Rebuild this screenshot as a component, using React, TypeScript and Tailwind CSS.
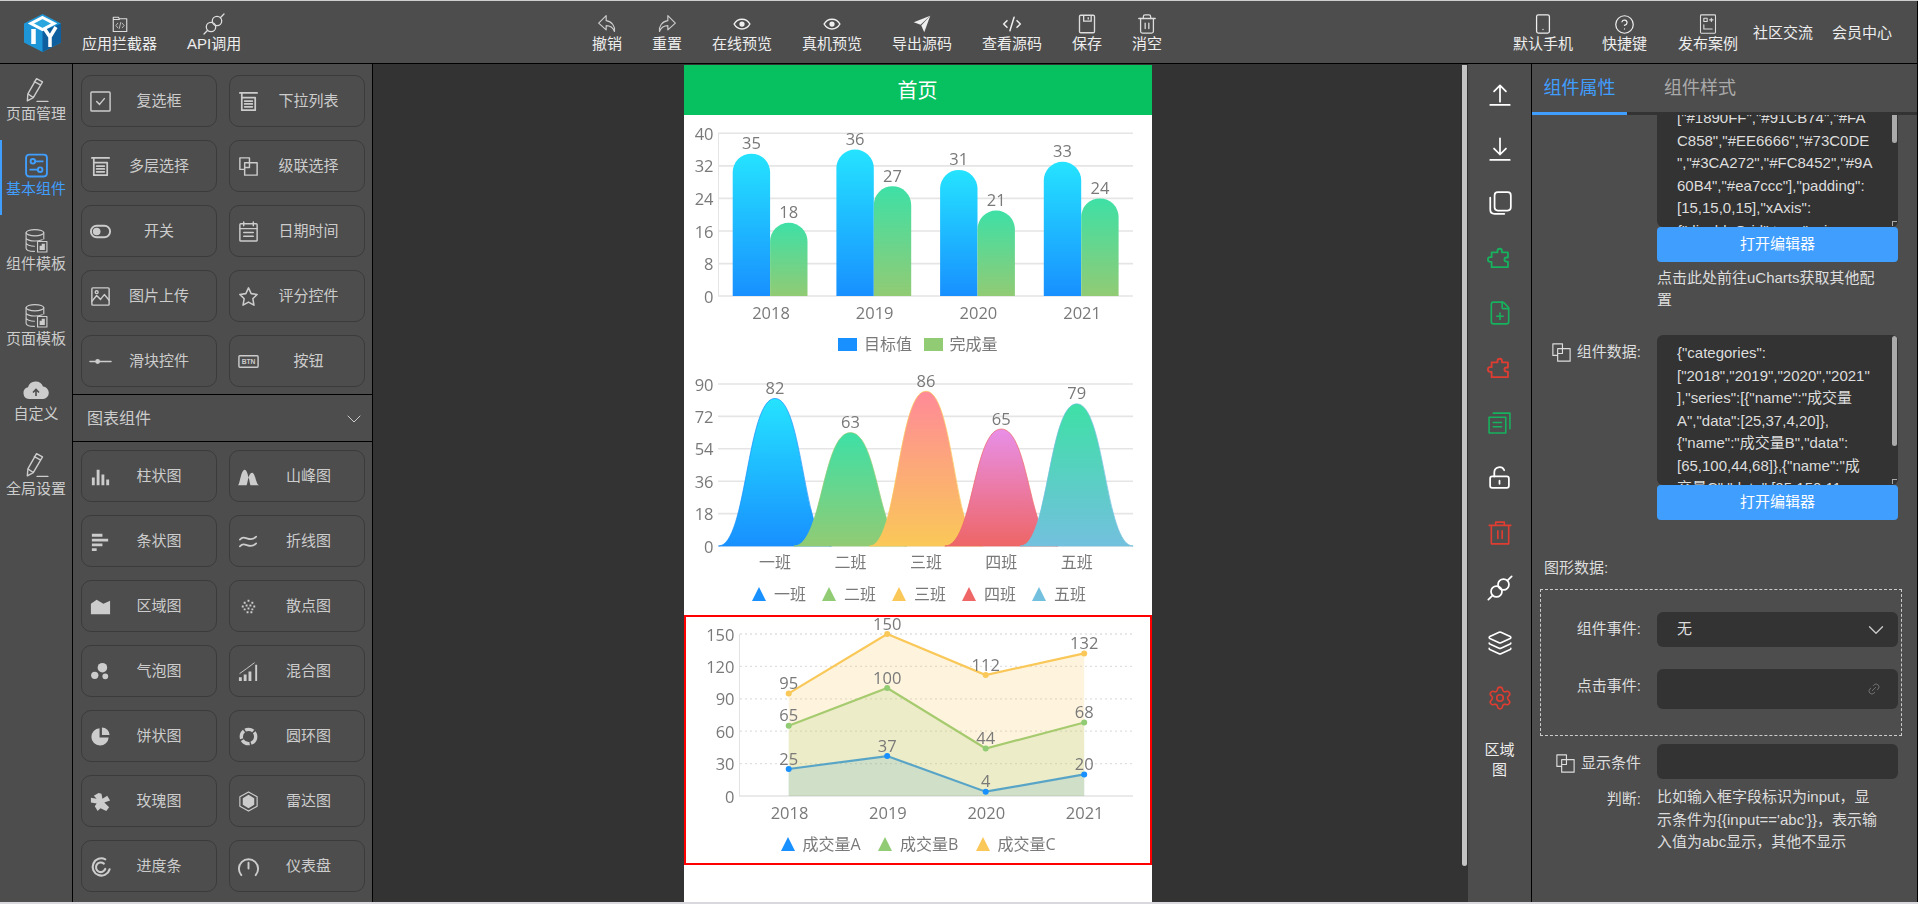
import React from "react";
import { CodeXml, Trash2, Smartphone, CircleHelp, FilePlus, Layers, Settings, Link2, ChevronDown } from "lucide-react";

type P = { children?: React.ReactNode; size?: number; w?: number; className?: string };
const S = ({ children, size = 18, w = 1.5, className }: P) => (
  <svg width={size} height={size} viewBox="0 0 24 24" fill="none" stroke="currentColor" strokeWidth={w} strokeLinecap="round" strokeLinejoin="round" className={className}>
    {children}
  </svg>
);
const F = ({ d }: { d: string }) => <path d={d} fill="currentColor" stroke="none" />;

const PlugI = ({ size, className, w = 1.5 }: { size: number; className?: string; w?: number }) => (
  <S size={size} w={w} className={className}><circle cx="9" cy="15" r="4.700" /><circle cx="15" cy="9" r="4.700" /><path d="M2 22l3.700-3.700M18.300 5.700L22 2" /></S>
);
const PuzzleI = ({ className }: { className?: string }) => (
  <S size={27} w={1.600} className={className}><path d="M5 7.500h5.200v-1.300a2 2 0 1 1 4 0v1.300H19.500v4.500h-1.300a1.800 1.800 0 0 0 0 3.600h1.300v5H5v-4.700H3.800a2.100 2.100 0 0 1 0-4.200H5z" /></S>
);

const I = {
  check: <S size={20}><rect x="2" y="2" width="20" height="20" rx="1" /><path d="M8 12l3 3 5-6" /></S>,
  select: <S size={20} w={1.8}><path d="M3 3h18M5 3v18h14V8H5M8 11.500h8M8 14.500h8M8 17.500h8" /></S>,
  cascade: <S size={20}><path d="M13 8V3H3v12h5M8 8h13v13H8zM13 8v5H8" /></S>,
  toggle: <S size={20} w={2}><rect x="2" y="6" width="20" height="12" rx="6" /><circle cx="8" cy="12" r="4" fill="currentColor" stroke="none" /></S>,
  cal: <S size={20}><rect x="3" y="4" width="18" height="18" rx="1" /><path d="M7 2v4M17 2v4M3 9h18M7 13h10M7 17h10" /></S>,
  image: <S size={20}><rect x="3" y="3" width="18" height="18" rx="1" /><path d="M3 17l5-6 4 4 4-5 5 6" /><circle cx="8" cy="7.500" r="1.500" /></S>,
  star: <S size={20} w={1.6}><path d="M12 3l2.800 6 6.200.8-4.500 4.500 1.200 6.700-5.700-3.200-5.700 3.200 1.200-6.700L3 9.800 9.200 9z" /></S>,
  slider: <S size={20}><path d="M1 12h22" /><circle cx="9" cy="12" r="2.500" fill="currentColor" stroke="none" /></S>,
  btn: (
    <svg width="20" height="20" viewBox="0 0 24 24"><rect x="2" y="6" width="20" height="12" rx="1" fill="none" stroke="currentColor" strokeWidth="1.500" /><text x="12" y="14.300" textAnchor="middle" fontSize="7" fontWeight="700" fill="currentColor" fontFamily="Liberation Sans">BTN</text></svg>
  ),
  bars: <S size={20}><F d="M3 13h3v8H3zM8 5h3v16H8zM13 10h3v11h-3zM18 15h3v6h-3z" /></S>,
  mount: <S size={20}><F d="M1 21C3 21 4 5 8 5c2 0 3 4 4 8 1-3 2-5 4-5 3 0 4 13 7 13H14c-1-3-1-6-2-8-1 3-1 6-2 8z" /></S>,
  hbar: <S size={20}><F d="M3 4h11v3H3zM3 9h17v3H3zM3 14h11v3H3zM3 19h5v3H3z" /></S>,
  wave: <S size={20} w={1.8}><path d="M3 10c3-3 5-2 8-1s6 1 9-2M3 17c3-3 5-2 8-1s6 1 9-2" /></S>,
  area: <S size={20}><F d="M2 20V9l6-4 7 4 7-3v14z" /></S>,
  scatter: <S size={20}><F d="M11 5h2v2h-2zM7 7h2v2H7zM15 7h2v2h-2zM5 11h2v2H5zM9 10h2v2H9zM13 10h2v2h-2zM17 11h2v2h-2zM7 14h2v2H7zM11 13h2v2h-2zM15 14h2v2h-2zM10 17h2v2h-2zM14 17h2v2h-2z" /></S>,
  bubble: <S size={20}><circle cx="14" cy="8" r="5" fill="currentColor" stroke="none" /><circle cx="6" cy="16" r="3.800" fill="currentColor" stroke="none" /><circle cx="17" cy="17" r="3" fill="currentColor" stroke="none" /></S>,
  mix: <S size={20}><F d="M2 18h3v4H2zM7 15h3v7H7zM12 12h3v10h-3zM19 5h2v17h-2z" /><path d="M3 14l7-5 8-6" strokeWidth="1" /></S>,
  pie: <S size={20}><F d="M11 3.500a9 9 0 1 0 9.500 9.500H11zM13.500 2.500a8 8 0 0 1 8 8h-8z" /></S>,
  donut: <S size={20}><circle cx="12" cy="12" r="7.500" strokeWidth="3.500" strokeDasharray="9 1.500" strokeLinecap="butt" /></S>,
  rose: <S size={20}><F d="M10 3l3 1 1 5 5-3 3 5-6 2 5 5-3 4-6-3-3 3-3-5 2-3-6-1 0-5 6 1-3-3z" /></S>,
  radar: <S size={20} w={1.2}><path d="M12 2l9 5v10l-9 5-9-5V7z" /><F d="M12 5l6 3.500v7L12 19l-6-3.500v-7z" /></S>,
  prog: <S size={20} w={2.2}><path d="M17 4.500A9 9 0 1 0 21.500 15" /><path d="M15.500 9A5 5 0 1 0 17 14.500" /></S>,
  gauge: <S size={20} w={2}><path d="M4.500 21A10 10 0 1 1 19.500 21M12 8v6" /></S>,
};

const Pencil = ({ size = 26 }: { size?: number }) => (
  <S size={size} w={1.300}><path d="M12.500 1.500L18 4.500 9.500 19 4 22l.5-6.500zM10.500 4.200L16 7.200M4.500 15.500L9.500 19M13 22.500h10" /></S>
);
const DbFile = () => (
  <S size={25} w={1.100}><ellipse cx="10.500" cy="4.500" rx="8.500" ry="3" /><path d="M2 4.500v15c0 1.700 3.500 3 8 3M19 4.500v6M2 9.500c0 1.700 4 3 8.500 3 2 0 5-.5 7-1.300M2 14.500c0 1.700 4 3 8 3" /><rect x="13" y="13" width="9" height="10" fill="none" /><F d="M15 17h2v-2h3v6h-5z" /></S>
);
const Sliders = () => (
  <S size={25} w={1.800}><rect x="2" y="1.500" width="20" height="21" rx="3" /><circle cx="8.500" cy="8" r="2.200" /><path d="M11 8h7M6 16h7" /><circle cx="15.500" cy="16" r="2.200" /></S>
);
const Cloud = () => (
  <svg width="28" height="18" viewBox="0 0 28 18"><path d="M7 18a6 6 0 0 1-1-11.800A8 8 0 0 1 21 5.500 6.300 6.300 0 0 1 21.500 18z" fill="currentColor" /><path d="M14 15V9M11 11.500L14 8.500l3 3" stroke="#4d4d4d" strokeWidth="1.600" fill="none" /></svg>
);
const Undo = ({ flip }: { flip?: boolean }) => (
  <svg width="20" height="20" viewBox="0 0 24 24" fill="none" stroke="#ccc" strokeWidth="1.400" strokeLinejoin="round" style={flip ? { transform: "scaleX(-1)" } : undefined}>
    <path d="M11 2L2 11l9 8v-5c4.500 0 8 2 10 7 1-6-3-12-10-13z" />
  </svg>
);
const Logo = () => (
  <svg width="37" height="38" viewBox="0 0 37 38">
    <polygon points="18.500,0 37,9.500 37,28.500 18.500,38 0,28.500 0,9.500" fill="#1e95d6" />
    <polygon points="18.500,17 37,9.500 37,28.500 18.500,38" fill="#0f5f9f" />
    <polygon points="18.500,3.500 30,9.500 18.500,15.500 7,9.500" fill="#2ba6de" stroke="#fff" strokeWidth="3" />
    <path d="M9.500 15v15" stroke="#fff" strokeWidth="4.500" />
    <path d="M20 14l6 9 6-10M26 23v10" stroke="#fff" strokeWidth="3.500" fill="none" />
  </svg>
);
const EyeI = () => (
  <svg width="18" height="18" viewBox="0 0 24 24" fill="none" stroke="#eee" strokeWidth="2"><path d="M1.500 12C4 7.500 8 5.500 12 5.500S20 7.500 22.500 12C20 16.500 16 18.500 12 18.500S4 16.500 1.500 12z" /><circle cx="12" cy="12" r="2.500" fill="#eee" /></svg>
);

const L = (c: React.ReactNode, t: string) => ({ c, t });
const topLeft = [
  L(<S size={18}><path d="M3 6V3h7l1 2h10v17H3zM3 6h8" /><path d="M9 11l-2.500 3L9 17M15 11l2.500 3-2.500 3M13 10l-2 8" strokeWidth="1" /></S>, "应用拦截器"),
  L(<PlugI size={24} w={1.300} />, "API调用"),
];
const topCenter = [
  L(<Undo />, "撤销"),
  L(<Undo flip />, "重置"),
  L(<EyeI />, "在线预览"),
  L(<EyeI />, "真机预览"),
  L(<svg width="18" height="18" viewBox="0 0 24 24" className="shrink-0"><polygon points="23,1 1,9.500 10,13" fill="#eee" /><polygon points="23,1 11,14 15,23" fill="#eee" /></svg>, "导出源码"),
  L(<CodeXml size={20} strokeWidth={1.800} color="#eee" />, "查看源码"),
  L(<svg width="20" height="20" viewBox="0 0 24 24" fill="none" stroke="#ddd" strokeWidth="1.600"><rect x="3" y="1.500" width="18" height="21" rx="1.500" /><path d="M8 2v6.500h9V2M13.500 4v2.500" /></svg>, "保存"),
  L(<Trash2 size={22} strokeWidth={1.400} color="#ddd" />, "消空"),
];
const sideItems = [
  L(<Pencil />, "页面管理"),
  L(<Sliders />, "基本组件"),
  L(<DbFile />, "组件模板"),
  L(<DbFile />, "页面模板"),
  L(<Cloud />, "自定义"),
  L(<Pencil />, "全局设置"),
];
const formCards = [
  L(I.check, "复选框"), L(I.select, "下拉列表"), L(I.select, "多层选择"), L(I.cascade, "级联选择"), L(I.toggle, "开关"),
  L(I.cal, "日期时间"), L(I.image, "图片上传"), L(I.star, "评分控件"), L(I.slider, "滑块控件"), L(I.btn, "按钮"),
];
const chartCards = [
  L(I.bars, "柱状图"), L(I.mount, "山峰图"), L(I.hbar, "条状图"), L(I.wave, "折线图"), L(I.area, "区域图"), L(I.scatter, "散点图"),
  L(I.bubble, "气泡图"), L(I.mix, "混合图"), L(I.pie, "饼状图"), L(I.donut, "圆环图"), L(I.rose, "玫瑰图"), L(I.radar, "雷达图"),
  L(I.prog, "进度条"), L(I.gauge, "仪表盘"),
];

const TopItem = ({ c, t }: { c: React.ReactNode; t: string }) => (
  <div className="flex flex-col items-center px-[15px] pt-[13px]">
    <div className="flex h-[20px] items-center justify-center text-[#ddd]">{c}</div>
    <div className="whitespace-nowrap text-[15px] leading-[20px] text-[#eee]">{t}</div>
  </div>
);
const Card = ({ c, t, left }: { c: React.ReactNode; t: string; left: boolean }) => (
  <div className={`flex h-[52px] w-[136px] items-center rounded-[10px] border border-[#3b3b3b] pl-[8px] text-[15px] text-[#ccc] ${left ? "pr-[8px]" : "pr-[5px]"}`}>
    <span className="flex w-[20px] shrink-0 justify-center [&>svg]:h-[23px] [&>svg]:w-[23px] [&>svg]:shrink-0">{c}</span>
    <span className="flex-1 text-center">{t}</span>
  </div>
);
const CardGrid = ({ items }: { items: { c: React.ReactNode; t: string }[] }) => (
  <div className="grid grid-cols-[136px_136px] gap-x-[12px] gap-y-[13px] px-[8px]">
    {items.map((i, n) => <Card key={i.t} {...i} left={n % 2 === 0} />)}
  </div>
);

const CF = "[font-family:'Open_Sans','Noto_Sans_CJK_SC',sans-serif]";
const T = ({ x, y, children, a = "middle", s = 16.5 }: { x: number; y: number; children: React.ReactNode; a?: "middle" | "end" | "start"; s?: number }) => (
  <text x={x} y={y} textAnchor={a} dominantBaseline="central" fontSize={s} fill="#797979">{children}</text>
);
const Grad = ({ id, a, b }: { id: string; a: string; b: string }) => (
  <linearGradient id={id} x1="0" y1="0" x2="0" y2="1"><stop offset="0" stopColor={a} /><stop offset="1" stopColor={b} /></linearGradient>
);
const Tri = ({ x, y, c }: { x: number; y: number; c: string }) => <polygon points={`${x + 7},${y} ${x + 14},${y + 14} ${x},${y + 14}`} fill={c} />;

const Chart1 = () => {
  const ys = [133.3, 165.9, 198.4, 231, 263.6, 296];
  const base = 296;
  const h = (v: number) => base - (v * 162.7) / 40;
  const r = 18.700;
  const bar = (x: number, v: number) => `M${x} ${base}V${h(v) + r}a${r} ${r} 0 0 1 ${2 * r} 0V${base}z`;
  const data = [[35, 18], [36, 27], [31, 21], [33, 24]];
  const x0 = [732.700, 836.400, 940.100, 1043.800];
  return (
    <svg width="468" height="245" viewBox="684 115 468 245" className={`block blur-[0.3px] ${CF}`}>
      <defs><Grad id="gb" a="#25e3ff" b="#1890ff" /><Grad id="gg" a="#3ee0a6" b="#91cb74" /></defs>
      {ys.map((y) => <line key={y} x1="718" x2="1133" y1={y} y2={y} stroke="#e5e5e5" strokeWidth="1.600" />)}
      <line x1="718.500" x2="718.500" y1="133" y2="296" stroke="#e5e5e5" />
      {["40", "32", "24", "16", "8", "0"].map((t, i) => <T key={t} x={713.500} y={ys[i]} a="end">{t}</T>)}
      {data.map((d, i) => (
        <g key={i}>
          <path d={bar(x0[i], d[0])} fill="url(#gb)" />
          <path d={bar(x0[i] + 37.400, d[1])} fill="url(#gg)" />
          <T x={x0[i] + 18.700} y={h(d[0]) - 11.500}>{d[0]}</T>
          <T x={x0[i] + 56.100} y={h(d[1]) - 11}>{d[1]}</T>
        </g>
      ))}
      {["2018", "2019", "2020", "2021"].map((t, i) => <T key={t} x={771 + i * 103.700} y={312}>{t}</T>)}
      <rect x="838" y="338" width="19" height="13" fill="#1890ff" />
      <T x={864} y={344} a="start" s={16}>目标值</T>
      <rect x="924" y="338" width="19" height="13" fill="#91cb74" />
      <T x={949.500} y={344} a="start" s={16}>完成量</T>
    </svg>
  );
};

const Chart2 = () => {
  const ys = [384, 416.400, 448.800, 481.200, 513.600, 546];
  const base = 546;
  const hw = 56.500;
  const items = [
    { v: 82, x: 775, t: "一班", id: "m1", a: "#25e3ff", b: "#1890ff" },
    { v: 63, x: 850.400, t: "二班", id: "m2", a: "#3ee0a6", b: "#91cb74" },
    { v: 86, x: 926, t: "三班", id: "m3", a: "#ff8a98", b: "#fac858" },
    { v: 65, x: 1001.300, t: "四班", id: "m4", a: "#e88fe8", b: "#ee6666" },
    { v: 79, x: 1076.700, t: "五班", id: "m5", a: "#3ee0a6", b: "#73c0de" },
  ];
  const lg = [[752, 774], [822, 844], [892, 914], [962, 984], [1032, 1054]];
  return (
    <svg width="468" height="255" viewBox="684 360 468 255" className={`block blur-[0.3px] ${CF}`}>
      <defs>{items.map((m) => <Grad key={m.id} id={m.id} a={m.a} b={m.b} />)}</defs>
      {ys.map((y) => <line key={y} x1="718" x2="1133" y1={y} y2={y} stroke="#e5e5e5" strokeWidth="1.600" />)}
      {["90", "72", "54", "36", "18", "0"].map((t, i) => <T key={t} x={713.500} y={ys[i]} a="end">{t}</T>)}
      {items.map((m) => {
        const top = base - (m.v * 162) / 90;
        const q = hw / 2;
        return (
          <g key={m.id}>
            <path d={`M${m.x - hw} ${base}C${m.x - q} ${base} ${m.x - q} ${top} ${m.x} ${top}C${m.x + q} ${top} ${m.x + q} ${base} ${m.x + hw} ${base}z`} fill={`url(#${m.id})`} stroke={m.b} strokeWidth="0.700" />
            <T x={m.x} y={top - 11}>{m.v}</T>
            <T x={m.x} y={562} s={16}>{m.t}</T>
          </g>
        );
      })}
      {items.map((m, i) => (
        <g key={m.t}>
          <Tri x={lg[i][0]} y={587} c={m.b} />
          <T x={lg[i][1]} y={594} a="start" s={16}>{m.t}</T>
        </g>
      ))}
    </svg>
  );
};

const Chart3 = () => {
  const ys = [634, 666.400, 698.800, 731.200, 763.600, 796];
  const xs = [788.700, 887.200, 985.700, 1084.200];
  const Y = (v: number) => 796 - (v * 162) / 150;
  const series = [
    { d: [25, 37, 4, 20], c: "#1890ff" },
    { d: [65, 100, 44, 68], c: "#91cb74" },
    { d: [95, 150, 112, 132], c: "#fac858" },
  ];
  const pts = (d: number[]) => d.map((v, i) => `${xs[i]},${Y(v)}`).join(" ");
  return (
    <svg width="464" height="246" viewBox="686 617 464 246" className={`block overflow-visible blur-[0.3px] ${CF}`}>
      {ys.slice(0, 5).map((y) => <line key={y} x1="740" x2="1133" y1={y} y2={y} stroke="#e0e0e0" strokeWidth="1.300" strokeDasharray="2 3" />)}
      <line x1="739.500" x2="739.500" y1="634" y2="796" stroke="#e3e3e3" />
      <line x1="739" x2="1133" y1="796" y2="796" stroke="#e3e3e3" strokeWidth="1.500" />
      {["150", "120", "90", "60", "30", "0"].map((t, i) => <T key={t} x={734.500} y={ys[i]} a="end">{t}</T>)}
      {series.map((s) => (
        <g key={s.c}>
          <polygon points={`${xs[0]},796 ${pts(s.d)} ${xs[3]},796`} fill={s.c} fillOpacity="0.200" />
          <polyline points={pts(s.d)} fill="none" stroke={s.c} strokeWidth="2.200" />
        </g>
      ))}
      {series.map((s) => s.d.map((v, i) => <circle key={s.c + i} cx={xs[i]} cy={Y(v)} r="3" fill={s.c} />))}
      {series.map((s) => s.d.map((v, i) => <T key={s.c + i} x={xs[i]} y={Y(v) - 11}>{v}</T>))}
      {["2018", "2019", "2020", "2021"].map((t, i) => <T key={t} x={789.500 + i * 98.400} y={812}>{t}</T>)}
      <Tri x={781} y={837} c="#1890ff" /><T x={802.500} y={844} a="start" s={16}>成交量A</T>
      <Tri x={878} y={837} c="#91cb74" /><T x={900} y={844} a="start" s={16}>成交量B</T>
      <Tri x={976} y={837} c="#fac858" /><T x={997.500} y={844} a="start" s={16}>成交量C</T>
    </svg>
  );
};

const tools: { c: React.ReactNode; k: string }[] = [
  { k: "up", c: <S size={26} w={1.600} className="text-white"><path d="M12 20V5M6.500 10.500L12 5l5.500 5.500M3 23h18" /></S> },
  { k: "down", c: <S size={26} w={1.600} className="text-white"><path d="M12 3v15M6.500 12.500L12 18l5.500-5.500M3 23h18" /></S> },
  { k: "copy", c: <S size={26} w={1.600} className="text-white"><rect x="7" y="2" width="15" height="17" rx="3" /><path d="M3 7v11c0 2.500 1.500 4 4 4h9" /></S> },
  { k: "p1", c: <PuzzleI className="text-[#16b25e]" /> },
  { k: "f1", c: <FilePlus size={26} strokeWidth={1.500} className="text-[#16b25e]" /> },
  { k: "p2", c: <PuzzleI className="text-[#e03d32]" /> },
  { k: "c2", c: <S size={25} w={1.500} className="text-[#16b25e]"><rect x="2" y="7" width="16" height="15" /><path d="M6 3h16v15M6 12h8M6 16h8" /></S> },
  { k: "lock", c: <S size={25} w={1.700} className="text-white"><rect x="3" y="11" width="18" height="11" rx="2" /><path d="M7 11V7a5 5 0 0 1 9.500-2M12 15v3" /></S> },
  { k: "trash", c: <S size={26} w={1.500} className="text-[#e03d32]"><path d="M2 5h20M8 5V2h8v3M4 5v17h16V5M10 10v7M14 10v7" /></S> },
  { k: "plug", c: <PlugI size={28} w={1.500} className="text-white" /> },
  { k: "layers", c: <Layers size={26} strokeWidth={1.500} className="text-white" /> },
  { k: "gear", c: <Settings size={26} strokeWidth={1.500} className="text-[#e03d32]" /> },
];

const FIELD = "w-[241px] shrink-0";
const Label = ({ children, icon }: { children: React.ReactNode; icon?: boolean }) => (
  <div className="flex h-[35px] w-[125px] shrink-0 items-center justify-end gap-[4px] pr-[16px] text-[15px] text-[#ddd]">
    {icon && <S size={23} w={1.200}><path d="M13 8V3H3v12h5M8 8h13v13H8zM13 8v5H8" /></S>}
    <span>{children}</span>
  </div>
);
const Btn = () => (
  <div className={`${FIELD} flex h-[35px] items-center justify-center rounded-[4px] bg-[#409eff] text-[15px] text-white`}>打开编辑器</div>
);
const Thumb = ({ h }: { h: number }) => (
  <>
    <span className="absolute right-[1px] top-[1px] w-[5px] rounded-[3px] bg-[#aaa]" style={{ height: h }} />
    <span className="absolute bottom-[1px] right-[1px] h-[5px] w-[5px] border-l border-t border-[#aaa]" />
  </>
);

export default function App() {
  const lines1 = ['["#1890FF","#91CB74","#FA', 'C858","#EE6666","#73C0DE', '","#3CA272","#FC8452","#9A', '60B4","#ea7ccc"],"padding":', '[15,15,0,15],"xAxis":', '{"disableGrid":true,"axis'];
  const lines2 = ['{"categories":', '["2018","2019","2020","2021"', '],"series":[{"name":"成交量', 'A","data":[25,37,4,20]},', '{"name":"成交量B","data":', '[65,100,44,68]},{"name":"成', '交量C","data":[95,150,11'];
  return (
    <div className="flex h-[904px] w-[1918px] flex-col overflow-hidden bg-[#4d4d4d] [font-family:'Liberation_Sans','Noto_Sans_CJK_SC',sans-serif]">
      <div className="h-[1px] bg-[#cfcfcf]" />
      <header className="flex h-[63px] shrink-0 border-b border-r border-black bg-[#4d4d4d]">
        <div className="flex w-[577px] shrink-0 pl-[24px]">
          <div className="mr-[6px] mt-[13px]"><Logo /></div>
          {topLeft.map((i) => <TopItem key={i.t} {...i} />)}
        </div>
        <div className="flex w-[600px] shrink-0">
          {topCenter.map((i) => <TopItem key={i.t} {...i} />)}
        </div>
        <div className="ml-[336px] flex items-start text-[15px] leading-[20px] text-[#eee]">
          <div className="flex w-[60px] flex-col items-center pt-[13px]"><div className="flex h-[20px] items-center text-[#eee]"><Smartphone size={22} strokeWidth={1.400} /></div><span>默认手机</span></div>
          <div className="ml-[29px] flex w-[45px] flex-col items-center pt-[13px]"><div className="flex h-[20px] items-center text-[#eee]"><CircleHelp size={21} strokeWidth={1.400} /></div><span>快捷键</span></div>
          <div className="ml-[31px] flex w-[60px] flex-col items-center pt-[13px]"><div className="flex h-[20px] items-center text-[#ddd]"><S size={20} w={1.300}><rect x="3" y="1" width="18" height="22" rx="1" /><path d="M7 5h4v4H7zM14 7h4M16 5v4M7 13v5h10" /></S></div><span>发布案例</span></div>
          <div className="ml-[15px] w-[60px] pt-[22px]">社区交流</div>
          <div className="ml-[19px] w-[60px] pt-[22px]">会员中心</div>
        </div>
      </header>

      <main className="flex min-h-0 flex-1 border-r border-black">
        <nav className="w-[73px] shrink-0 border-r border-black pt-[1px]">
          {sideItems.map((s, i) => (
            <div key={s.t} className={`relative flex h-[75px] flex-col items-center pt-[13px] text-[15px] leading-[20px] ${i === 1 ? "text-[#409eff]" : "text-[#ccc]"}`}>
              {i === 1 && <span className="absolute inset-y-0 left-0 w-[2px] bg-[#409eff]" />}
              <div className="flex h-[24px] items-center justify-center">{s.c}</div>
              <div className="mt-[2px] whitespace-nowrap">{s.t}</div>
            </div>
          ))}
        </nav>

        <aside className="w-[300px] shrink-0 border-r border-black pt-[11px]">
          <CardGrid items={formCards} />
          <div className="mt-[7px] flex h-[48px] items-center justify-between border-y border-black pl-[14px] pr-[6px] pt-[2px] text-[16px] text-[#ccc]">
            <span>图表组件</span>
            <ChevronDown size={24} strokeWidth={1} />
          </div>
          <div className="h-[8px]" />
          <CardGrid items={chartCards} />
        </aside>

        <section className="flex min-w-0 flex-1 bg-[#333] pt-[1px]">
          <div className="flex min-w-0 flex-1 justify-center">
            <div className="w-[468px] bg-white">
              <div className="flex h-[50px] items-center justify-center bg-[#07c160] pt-[2px] text-[20px] text-white">首页</div>
              <Chart1 />
              <Chart2 />
              <div className="h-[250px] w-[468px] border-2 border-[#ff0000]">
                <Chart3 />
              </div>
            </div>
          </div>
          <div className="w-[6px] shrink-0 pr-[1px]"><div className="h-[801px] rounded-b-[3px] bg-[#c4c4c4]" /></div>
        </section>

        <div className="w-[64px] shrink-0 border-r border-black pt-[1px]">
          {tools.map((t) => <div key={t.k} className="flex h-[55px] items-center justify-center">{t.c}</div>)}
          <div className="mx-auto mt-[15px] w-[30px] text-center text-[15px] leading-[20px] text-[#eee]">区域图</div>
        </div>

        <div className="w-[385px] shrink-0">
          <div className="flex h-[51px] border-b-[3px] border-[#333] text-[18px]">
            <div className="mb-[-3px] flex h-[51px] w-[95px] items-center justify-center border-b-[3px] border-[#409eff] text-[#409eff]">组件属性</div>
            <div className="flex items-center pl-[37px] text-[#aaa]">组件样式</div>
          </div>

          <div className="flex">
            <div className="w-[125px] shrink-0" />
            <div className={FIELD}>
              <div className="relative h-[112px] overflow-hidden rounded-b-[6px] bg-[#333] pl-[20px] text-[15px] leading-[22.500px] text-[#ddd]">
                <div className="mt-[-8px] whitespace-nowrap">{lines1.map((l) => <div key={l}>{l}</div>)}</div>
                <span className="absolute right-[1px] top-0 h-[28px] w-[5px] rounded-b-[3px] bg-[#aaa]" />
                <span className="absolute bottom-[1px] right-[1px] h-[5px] w-[5px] border-l border-t border-[#aaa]" />
              </div>
              <Btn />
              <div className="mt-[5px] w-[228px] text-[15px] leading-[22px] text-[#ddd]">点击此处前往uCharts获取其他配置</div>
            </div>
          </div>

          <div className="mt-[24px] flex items-start">
            <Label icon>组件数据:</Label>
            <div className={FIELD}>
              <div className="relative h-[150px] overflow-hidden rounded-[6px] bg-[#333] pl-[20px] pt-[7px] text-[15px] leading-[22.500px] text-[#ddd]">
                <div className="whitespace-nowrap">{lines2.map((l) => <div key={l}>{l}</div>)}</div>
                <Thumb h={110} />
              </div>
              <Btn />
            </div>
          </div>

          <div className="mt-[37px] pl-[12px] text-[15px] leading-[22px] text-[#ddd]">图形数据:</div>

          <div className="ml-[8px] mt-[10px] h-[147px] w-[362px] border border-dashed border-[#ccc] pt-[22px]">
            <div className="flex items-start">
              <div className="flex h-[35px] w-[116px] shrink-0 items-center justify-end pr-[16px] text-[15px] text-[#ddd]">组件事件:</div>
              <div className={`${FIELD} flex h-[35px] items-center justify-between rounded-[6px] bg-[#333] pl-[20px] pr-[9px] text-[15px] text-[#ddd]`}>
                <span>无</span>
                <ChevronDown size={26} strokeWidth={1.200} className="text-[#ccc]" />
              </div>
            </div>
            <div className="mt-[22px] flex items-start">
              <div className="flex h-[35px] w-[116px] shrink-0 items-center justify-end pr-[16px] text-[15px] text-[#ddd]">点击事件:</div>
              <div className={`${FIELD} flex h-[40px] items-center justify-end rounded-[6px] bg-[#333] pr-[17px] text-[#777]`}>
                <Link2 size={14} strokeWidth={1.500} className="-rotate-45" />
              </div>
            </div>
          </div>

          <div className="mt-[8px] flex items-start">
            <div className="pt-[2px]"><Label icon>显示条件</Label></div>
            <div className={`${FIELD} h-[35px] rounded-[6px] bg-[#333]`} />
          </div>

          <div className="mt-[5px] flex items-start">
            <div className="flex w-[125px] shrink-0 justify-end pr-[16px] pt-[2px] text-[15px] leading-[22.500px] text-[#ddd]">判断:</div>
            <div className={`${FIELD} text-[15px] leading-[22.500px] text-[#ddd]`}>
              <div>比如输入框字段标识为input，显</div>
              <div>示条件为{"{{input=='abc'}}"}，表示输</div>
              <div>入值为abc显示，其他不显示</div>
            </div>
          </div>
        </div>
      </main>
      <div className="h-[2px] shrink-0 bg-[#d8d8de]" />
    </div>
  );
}
